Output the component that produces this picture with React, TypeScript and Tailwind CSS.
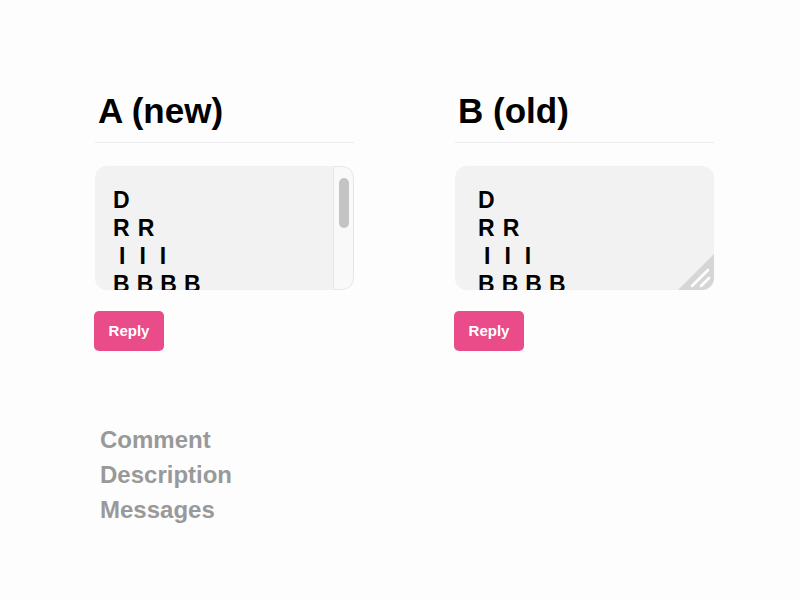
import React from "react";

const font = { fontFamily: '"Liberation Sans", Arial, Helvetica, sans-serif' };

function Row({ chars, gap, offset = 0 }: { chars: string[]; gap: string; offset?: number }) {
  return (
    <div className={`flex ${gap}`} style={offset ? { paddingLeft: offset } : undefined}>
      {chars.map((c, i) => (
        <span key={i}>{c}</span>
      ))}
    </div>
  );
}

function Lines({ pl }: { pl: string }) {
  return (
    <div className={`${pl} pt-[20px] text-[23px] leading-[28px] font-bold text-black`}>
      <Row chars={["D"]} gap="gap-0" />
      <Row chars={["R", "R"]} gap="gap-[8px]" />
      <Row chars={["I", "I", "I"]} gap="gap-[14px]" offset={6} />
      <Row chars={["B", "B", "B", "B"]} gap="gap-[7px]" />
    </div>
  );
}

function Column({ title, variant }: { title: string; variant: "new" | "old" }) {
  return (
    <div className="w-[259px] flex flex-col">
      <h1 className="text-[35px] leading-[35px] font-bold text-black pl-[3px]">{title}</h1>
      <div className="mt-[14px] h-px bg-[#ececec]" />
      <div className="mt-[23px] h-[124px] rounded-[12px] bg-[#f2f2f2] overflow-hidden relative flex">
        {variant === "new" ? (
          <>
            <div className="flex-1">
              <Lines pl="pl-[18px]" />
            </div>
            <div className="w-[21px] h-full bg-[#f9f9f9] border-l border-[#e6e6e6] border-y border-r rounded-r-[12px] flex justify-center pt-[11px]">
              <div className="w-[10px] h-[50px] rounded-full bg-[#c4c4c4]" />
            </div>
          </>
        ) : (
          <>
            <div className="flex-1">
              <Lines pl="pl-[23px]" />
            </div>
            <svg className="absolute right-0 bottom-0" width="36" height="36" viewBox="0 0 36 36">
              <polygon points="36,0 36,36 0,36" fill="#d6d6d6" />
              <line x1="14" y1="32" x2="30" y2="16" stroke="#ffffff" strokeWidth="2.5" strokeLinecap="round" />
              <line x1="23" y1="32" x2="31" y2="24" stroke="#ffffff" strokeWidth="2.5" strokeLinecap="round" />
            </svg>
          </>
        )}
      </div>
      <div className="mt-[21px]">
        <button className="w-[70px] h-[40px] rounded-[5px] bg-[#ea4c89] text-white text-[15px] font-bold -ml-px">
          Reply
        </button>
      </div>
    </div>
  );
}

export default function App() {
  return (
    <div className="w-[800px] h-[600px] bg-[#fdfdfd] pt-[93px] pl-[95px]" style={font}>
      <div className="flex gap-[101px]">
        <Column title="A (new)" variant="new" />
        <Column title="B (old)" variant="old" />
      </div>
      <div className="mt-[71px] pl-[5px] text-[24px] leading-[35px] font-bold text-[#999999]">
        <div>Comment</div>
        <div>Description</div>
        <div>Messages</div>
      </div>
    </div>
  );
}
